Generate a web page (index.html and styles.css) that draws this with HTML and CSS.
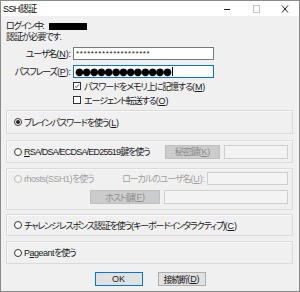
FILE: index.html
```html
<!DOCTYPE html>
<html lang="ja">
<head>
<meta charset="utf-8">
<title>SSH認証</title>
<link rel="stylesheet" href="styles.css">
</head>
<body>
<div class="window">
  <div class="titlebar">
    <span class="title">SSH認証</span>
    <div class="controls">
      <span class="ctl"><svg width="10" height="10" viewBox="0 0 10 10"><path d="M2 5.5h6" stroke="#222" stroke-width="1"/></svg></span>
      <span class="ctl"><svg width="10" height="10" viewBox="0 0 10 10"><rect x="2.5" y="1.5" width="6" height="7" fill="none" stroke="#c4c4c4" stroke-width="1"/></svg></span>
      <span class="ctl"><svg width="10" height="10" viewBox="0 0 10 10"><path d="M2 1.5l6 7M8 1.5l-6 7" stroke="#222" stroke-width="1"/></svg></span>
    </div>
  </div>
  <div class="body">
    <div class="info">
      <div class="line">ログイン中<span class="lat">:</span> <span class="redact"></span></div>
      <div class="line">認証が必要です.</div>
    </div>
    <div class="field-row user">
      <label class="flabel">ユーザ名<span class="lat">(<u>N</u>):</span></label>
      <div class="input">********************</div>
    </div>
    <div class="field-row pass">
      <label class="flabel">パスフレーズ<span class="lat">(<u>P</u>):</span></label>
      <div class="input focus"><span class="dots">●●●●●●●●●●●●●</span><span class="caret"></span></div>
    </div>
    <div class="check-row first">
      <span class="cbox"><svg width="8" height="8" viewBox="0 0 8 8"><path d="M1.3 4.2l1.8 1.9 3.6-4.3" fill="none" stroke="#222" stroke-width="1"/></svg></span>
      <span>パスワードをメモリ上に記憶する<span class="lat">(<u>M</u>)</span></span>
    </div>
    <div class="check-row second">
      <span class="cbox"></span>
      <span>エージェント転送する<span class="lat">(<u>O</u>)</span></span>
    </div>

    <div class="group g1">
      <div class="radio-row">
        <span class="radio checked"></span>
        <span>プレインパスワードを使う<span class="lat">(<u>L</u>)</span></span>
      </div>
    </div>

    <div class="group g2">
      <div class="radio-row grow">
        <span class="radio"></span>
        <span><span class="rsa"><u>R</u>SA/DSA/ECDSA/ED25519</span>鍵を使う</span>
      </div>
      <div class="btn disabled key-btn">秘密鍵<span class="lat">(<u>K</u>)</span></div>
      <div class="dfield key-field"></div>
    </div>

    <div class="group g3">
      <div class="g3-row">
        <div class="radio-row disabled-text grow">
          <span class="radio off"></span>
          <span><span class="semi">rhosts(SSH1)</span>を使う</span>
        </div>
        <span class="disabled-text local-label">ローカルのユーザ名<span class="lat">(<u>U</u>):</span></span>
        <div class="dfield local-field"></div>
      </div>
      <div class="g3-row second">
        <div class="btn disabled host-btn">ホスト鍵<span class="lat">(<u>F</u>)</span></div>
        <div class="dfield host-field"></div>
      </div>
    </div>

    <div class="group g4">
      <div class="radio-row">
        <span class="radio"></span>
        <span>チャレンジレスポンス認証を使う(キーボードインタラクティブ)<span class="lat">(<u>C</u>)</span></span>
      </div>
    </div>

    <div class="group g5">
      <div class="radio-row">
        <span class="radio"></span>
        <span><span class="semi">P<u>a</u>geant</span>を使う</span>
      </div>
    </div>

    <div class="buttons">
      <div class="btn default"><span class="lat">OK</span></div>
      <div class="btn">接続断<span class="lat">(<u>D</u>)</span></div>
    </div>
  </div>
</div>
</body>
</html>
```

FILE: styles.css
```css
* { box-sizing: border-box; }
html, body { margin: 0; padding: 0; }
body {
  width: 300px;
  height: 292px;
  font-family: "Liberation Sans", "Noto Sans CJK JP", sans-serif;
  font-size: 9px;
  font-feature-settings: "palt" 1;
  letter-spacing: -1.1px;
  color: #1a1a1a;
  background: #fff;
}
u { text-decoration: underline; text-underline-offset: 1px; }
.lat { letter-spacing: -0.1px; }
.semi { letter-spacing: -0.5px; }
.rsa { letter-spacing: -0.8px; }

.window {
  width: 300px;
  height: 292px;
  border: 1px solid #8a8a8a;
  display: flex;
  flex-direction: column;
  background: #f0f0f0;
}
.titlebar {
  height: 15px;
  background: #fff;
  display: flex;
  align-items: center;
  flex-shrink: 0;
}
.title { padding-left: 2px; font-size: 9px; letter-spacing: -0.6px; color: #000; }
.controls { margin-left: auto; display: flex; }
.ctl {
  width: 29px;
  height: 15px;
  display: flex;
  align-items: center;
  justify-content: center;
}

.body {
  flex: 1;
  display: flex;
  flex-direction: column;
  padding: 0 6px 0 5px;
}
.info { padding-top: 5px; }
.line { height: 11px; line-height: 11px; display: flex; align-items: center; }
.redact { display: inline-block; width: 38px; height: 7px; background: #000; margin-left: 4px; }

.field-row {
  display: flex;
  align-items: center;
  height: 13px;
}
.field-row.user { margin-top: 4px; }
.field-row.pass { margin-top: 5px; }
.flabel { width: 67px; text-align: right; padding-right: 2px; }
.input {
  width: 141px;
  height: 13px;
  background: #fff;
  border: 1px solid #7a7a7a;
  display: flex;
  align-items: center;
  padding-left: 2px;
  font-size: 8px;
  letter-spacing: 0.6px;
  overflow: hidden;
  white-space: nowrap;
}
.input.focus { border-color: #0078d7; padding-left: 1px; }
.dots { font-family: "DejaVu Sans", sans-serif; font-size: 10px; letter-spacing: -1.4px; color: #000; }
.caret { display: inline-block; width: 1px; height: 9px; background: #000; margin-left: 2px; }

.check-row {
  display: flex;
  align-items: center;
  height: 10px;
  padding-left: 67px;
  gap: 3px;
}
.check-row.first { margin-top: 3px; }
.check-row.second { margin-top: 4px; }
.cbox {
  width: 8px;
  height: 8px;
  border: 1px solid #333;
  background: #fff;
  display: flex;
  align-items: center;
  justify-content: center;
}
.cbox svg { display: block; }

.group {
  border: 1px solid #dadada;
  box-shadow: inset 1px 1px 0 #f9f9f9;
  width: 287px;
  padding: 0 4px 0 7px;
  display: flex;
  align-items: center;
}
.g1 { margin-top: 5px; height: 24px; }
.g2 { margin-top: 6px; height: 23px; }
.g3 { margin-top: 5px; height: 42px; flex-direction: column; align-items: stretch; padding-top: 3px; }
.g4 { margin-top: 4px; height: 22px; }
.g5 { margin-top: 5px; height: 23px; }

.radio-row { display: flex; align-items: center; gap: 2px; white-space: nowrap; }
.grow { flex: 1; }
.radio {
  width: 8px;
  height: 8px;
  border-radius: 50%;
  border: 1px solid #333;
  background: #fff;
  display: inline-flex;
  align-items: center;
  justify-content: center;
}
.radio.checked::after {
  content: "";
  width: 4px;
  height: 4px;
  border-radius: 50%;
  background: #222;
}
.radio.off { border-color: #bcbcbc; background: #f4f4f4; }
.disabled-text { color: #a0a0a0; }

.btn {
  height: 14px;
  background: #e1e1e1;
  border: 1px solid #adadad;
  display: flex;
  align-items: center;
  justify-content: center;
  white-space: nowrap;
}
.btn.disabled { background: #cccccc; border-color: #bfbfbf; color: #8c8c8c; }
.btn.default { border-color: #0078d7; }
.key-btn { width: 55px; }
.dfield { height: 14px; border: 1px solid #cfcfcf; background: #f3f3f3; }
.key-field { width: 64px; margin-left: 4px; }

.g3-row { display: flex; align-items: center; height: 13px; }
.g3-row.second { margin-top: 5px; height: 14px; padding-left: 76px; }
.local-label { margin-right: 2px; }
.local-field { width: 81px; height: 13px; }
.host-btn { width: 70px; }
.host-field { flex: 1; margin-left: 4px; }

.buttons {
  margin-top: 8px;
  display: flex;
  justify-content: center;
  gap: 15px;
  padding-left: 1px;
}
.buttons .btn { width: 48px; }
```
